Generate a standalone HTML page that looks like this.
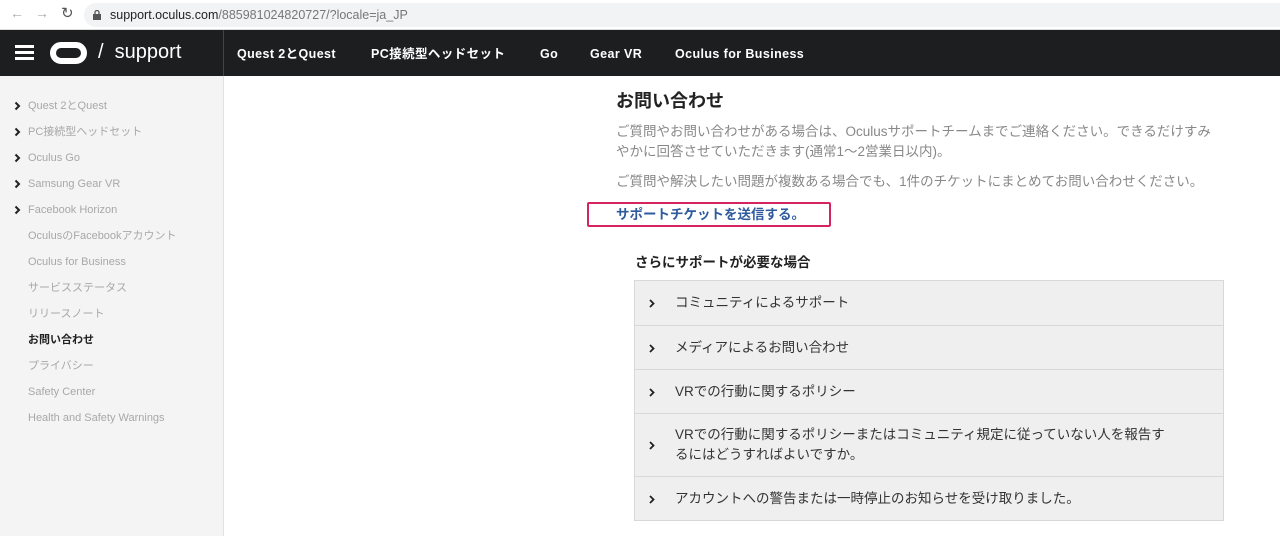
<!DOCTYPE html>
<html><head><meta charset="utf-8">
<style>
*{margin:0;padding:0;box-sizing:border-box}
body{width:1280px;height:536px;overflow:hidden;background:#fff;font-family:"Liberation Sans","Noto Sans CJK JP",sans-serif;position:relative}
.bar{position:absolute;left:0;top:0;width:1280px;height:30px;background:#fff;border-bottom:1px solid #ddd}
.url{position:absolute;left:84px;top:3px;width:1196px;height:24px;background:#f1f3f4;border-radius:12px 0 0 12px;font-size:12.5px;line-height:24px;padding-left:26px;color:#222}
.url span{color:#777}
.nav{position:absolute;left:0;top:30px;width:1280px;height:46px;background:#1c1e20;color:#fff}
.nav .sep{position:absolute;left:223px;top:0;width:1px;height:46px;background:#444}
.nav .links span{position:absolute;top:1px;line-height:46px;font-size:12.5px;font-weight:bold;letter-spacing:0.4px;white-space:nowrap}
.side{position:absolute;left:0;top:76px;width:224px;height:460px;background:#f4f4f4;border-right:1px solid #e2e2e2}
.side div{position:absolute;left:28px;font-size:11px;line-height:14px;height:14px;color:#a8a8a8;white-space:nowrap}
.side svg{position:absolute;left:-14px;top:2px}
p{position:absolute;left:616px;font-size:13.5px;color:#888;line-height:20px;width:640px;white-space:nowrap}
h1{position:absolute;left:616px;top:88px;font-size:18px;font-weight:bold;color:#222;white-space:nowrap;line-height:26px}
.tk{position:absolute;left:587px;top:202px;width:244px;height:25px;border:2px solid #d6255e;border-radius:2px}
.tk span{position:absolute;left:27px;top:2px;font-size:13.5px;line-height:18px;font-weight:bold;color:#2f5a9e;white-space:nowrap}
h3{position:absolute;left:635px;top:253px;font-size:13.5px;font-weight:bold;color:#222;line-height:20px}
.acc{position:absolute;left:634px;top:280px;width:590px;border:1px solid #d8d8d8;background:#efefef}
.acc div{border-top:1px solid #d8d8d8;font-size:13.5px;color:#333;padding-left:40px;position:relative;display:flex;align-items:center;line-height:20px}
.acc div:first-child{border-top:none}
.acc svg{position:absolute;left:14px;top:50%;margin-top:-4px}
</style></head><body>
<div class="bar">
<span style="position:absolute;left:10px;top:5px;color:#aaa;font-size:14px">←</span>
<span style="position:absolute;left:35px;top:5px;color:#aaa;font-size:14px">→</span>
<span style="position:absolute;left:61px;top:4px;color:#555;font-size:15px">↻</span>
<div class="url"><svg style="position:absolute;left:9px;top:7px" width="8" height="10"><rect x="0" y="4" width="8" height="6" fill="#555"/><path d="M2 4V2.5a2 2 0 0 1 4 0V4" stroke="#555" fill="none" stroke-width="1.3"/></svg>support.oculus.com<span>/885981024820727/?locale=ja_JP</span></div>
</div>
<div class="nav">
<div style="position:absolute;left:15px;top:15px;width:19px;height:3px;background:#fff;box-shadow:0 6px 0 #fff,0 12px 0 #fff"></div>
<div style="position:absolute;left:50px;top:12px;width:37px;height:22px;border:6px solid #fff;border-radius:11px"></div>
<div style="position:absolute;left:98px;top:11px;font-size:20px;color:#fff">/&nbsp;&nbsp;support</div>
<div class="sep"></div>
<div class="links"><span style="left:237px">Quest 2とQuest</span><span style="left:371px">PC接続型ヘッドセット</span><span style="left:540px">Go</span><span style="left:590px">Gear VR</span><span style="left:675px">Oculus for Business</span></div>
</div>
<div class="side">
<div style="top:23px"><svg width="7" height="10"><path d="M1.5 1.5L5 5L1.5 8.5" stroke="#222" stroke-width="2" fill="none"/></svg>Quest 2とQuest</div>
<div style="top:49px"><svg width="7" height="10"><path d="M1.5 1.5L5 5L1.5 8.5" stroke="#222" stroke-width="2" fill="none"/></svg>PC接続型ヘッドセット</div>
<div style="top:75px"><svg width="7" height="10"><path d="M1.5 1.5L5 5L1.5 8.5" stroke="#222" stroke-width="2" fill="none"/></svg>Oculus Go</div>
<div style="top:101px"><svg width="7" height="10"><path d="M1.5 1.5L5 5L1.5 8.5" stroke="#222" stroke-width="2" fill="none"/></svg>Samsung Gear VR</div>
<div style="top:127px"><svg width="7" height="10"><path d="M1.5 1.5L5 5L1.5 8.5" stroke="#222" stroke-width="2" fill="none"/></svg>Facebook Horizon</div>
<div style="top:153px">OculusのFacebookアカウント</div>
<div style="top:179px">Oculus for Business</div>
<div style="top:205px">サービスステータス</div>
<div style="top:231px">リリースノート</div>
<div style="top:257px;color:#222;font-weight:bold">お問い合わせ</div>
<div style="top:283px">プライバシー</div>
<div style="top:309px">Safety Center</div>
<div style="top:335px">Health and Safety Warnings</div>
</div>
<h1>お問い合わせ</h1>
<p style="top:122px">ご質問やお問い合わせがある場合は、Oculusサポートチームまでご連絡ください。できるだけすみ<br>やかに回答させていただきます(通常1〜2営業日以内)。</p>
<p style="top:172px">ご質問や解決したい問題が複数ある場合でも、1件のチケットにまとめてお問い合わせください。</p>
<div class="tk"><span>サポートチケットを送信する。</span></div>
<h3>さらにサポートが必要な場合</h3>
<div class="acc">
<div style="height:44px"><svg width="6" height="9"><path d="M1 1L4.5 4.5L1 8" stroke="#222" stroke-width="1.8" fill="none"/></svg>コミュニティによるサポート</div>
<div style="height:44px"><svg width="6" height="9"><path d="M1 1L4.5 4.5L1 8" stroke="#222" stroke-width="1.8" fill="none"/></svg>メディアによるお問い合わせ</div>
<div style="height:44px"><svg width="6" height="9"><path d="M1 1L4.5 4.5L1 8" stroke="#222" stroke-width="1.8" fill="none"/></svg>VRでの行動に関するポリシー</div>
<div style="height:63px"><svg width="6" height="9"><path d="M1 1L4.5 4.5L1 8" stroke="#222" stroke-width="1.8" fill="none"/></svg>VRでの行動に関するポリシーまたはコミュニティ規定に従っていない人を報告す<br>るにはどうすればよいですか。</div>
<div style="height:44px"><svg width="6" height="9"><path d="M1 1L4.5 4.5L1 8" stroke="#222" stroke-width="1.8" fill="none"/></svg>アカウントへの警告または一時停止のお知らせを受け取りました。</div>
</div>
</body></html>
